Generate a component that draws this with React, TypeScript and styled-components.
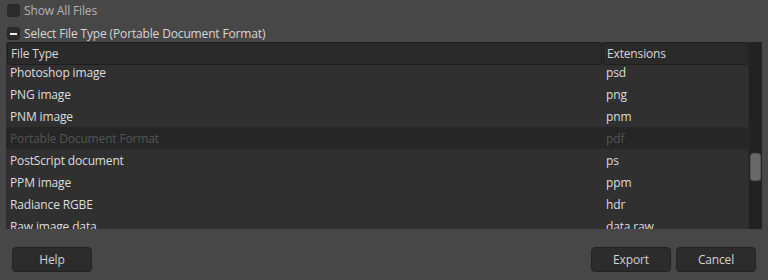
import React from "react";
import styled, { createGlobalStyle } from "styled-components";

const Global = createGlobalStyle`
  html, body { margin: 0; padding: 0; background: #474747; }
  body { font-family: "Open Sans", "Noto Sans", sans-serif; font-size: 12px; letter-spacing: -0.15px; }
`;

const Page = styled.div`
  width: 768px;
  height: 280px;
  background: #474747;
  display: flex;
  flex-direction: column;
  overflow: hidden;
`;

const Options = styled.div`
  display: flex;
  flex-direction: column;
  gap: 10px;
  padding: 4px 0 0 7px;
`;

const OptionRow = styled.div<{ $dim?: boolean }>`
  display: flex;
  align-items: center;
  gap: 4px;
  height: 13px;
  color: ${(p) => (p.$dim ? "#b4b4b4" : "#d6d6d6")};
  white-space: nowrap;
`;

const Box = styled.span`
  width: 13px;
  height: 13px;
  box-sizing: border-box;
  border-radius: 3px;
  background: #2c2c2c;
  border: 1px solid #262626;
  display: flex;
  align-items: center;
  justify-content: center;
`;

const Dash = styled.span`
  width: 7px;
  height: 2px;
  background: #f0f0f0;
`;

const TableFrame = styled.div`
  margin: 2px 6px 0 6px;
  height: 187px;
  display: flex;
  background: #303030;
`;

const ListArea = styled.div`
  flex: 1;
  display: flex;
  flex-direction: column;
  min-width: 0;
`;

const Header = styled.div`
  display: grid;
  grid-template-columns: 595px 1fr;
  gap: 1px;
  padding-left: 1px;
  height: 23px;
  position: relative;
  z-index: 1;
  background: #303030;
`;

const HeadCell = styled.div`
  box-sizing: border-box;
  border: 1px solid #1e1e1e;
  border-radius: 3px;
  background: #2a2a2a;
  color: #d8d8d8;
  padding-left: 3px;
  display: flex;
  align-items: center;
`;

const Body = styled.div`
  flex: 1;
  overflow: hidden;
`;

const Rows = styled.div`
  margin-top: -4px;
`;

const Row = styled.div<{ $disabled?: boolean }>`
  display: grid;
  grid-template-columns: 596px 1fr;
  height: 22px;
  align-items: center;
  background: ${(p) => (p.$disabled ? "#262626" : "transparent")};
  color: ${(p) => (p.$disabled ? "#555555" : "#dedede")};
`;

const Cell = styled.div`
  padding-left: 4px;
  white-space: nowrap;
`;

const Scrollbar = styled.div`
  width: 14px;
  background: #222222;
  border-left: 1px solid #2a2a2a;
  box-sizing: border-box;
  padding: 111px 1px 0 1px;
`;

const Thumb = styled.div`
  height: 28px;
  border-radius: 3px;
  background: #686868;
  border: 1px solid #555;
  box-sizing: border-box;
`;

const Footer = styled.div`
  display: flex;
  gap: 5px;
  padding: 18px 12px 0 12px;
`;

const Spacer = styled.div`
  flex: 1;
`;

const Button = styled.button`
  width: 80px;
  height: 25px;
  box-sizing: border-box;
  border: 1px solid #222222;
  border-radius: 4px;
  background: #2c2c2c;
  color: #d2d2d2;
  font-family: inherit;
  font-size: 12px;
  letter-spacing: inherit;
  padding: 0;
`;

const rows: [string, string, boolean?][] = [
  ["Photoshop image", "psd"],
  ["PNG image", "png"],
  ["PNM image", "pnm"],
  ["Portable Document Format", "pdf", true],
  ["PostScript document", "ps"],
  ["PPM image", "ppm"],
  ["Radiance RGBE", "hdr"],
  ["Raw image data", "data,raw"],
];

export default function App() {
  return (
    <Page>
      <Global />
      <Options>
        <OptionRow $dim>
          <Box />
          Show All Files
        </OptionRow>
        <OptionRow>
          <Box>
            <Dash />
          </Box>
          Select File Type (Portable Document Format)
        </OptionRow>
      </Options>
      <TableFrame>
        <ListArea>
          <Header>
            <HeadCell>File Type</HeadCell>
            <HeadCell>Extensions</HeadCell>
          </Header>
          <Body>
            <Rows>
              {rows.map(([name, ext, dis]) => (
                <Row key={name} $disabled={dis}>
                  <Cell>{name}</Cell>
                  <Cell>{ext}</Cell>
                </Row>
              ))}
            </Rows>
          </Body>
        </ListArea>
        <Scrollbar>
          <Thumb />
        </Scrollbar>
      </TableFrame>
      <Footer>
        <Button>Help</Button>
        <Spacer />
        <Button>Export</Button>
        <Button>Cancel</Button>
      </Footer>
    </Page>
  );
}
